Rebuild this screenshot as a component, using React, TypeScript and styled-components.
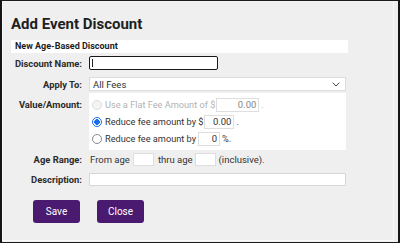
import React from "react";
import styled, { createGlobalStyle } from "styled-components";

const Global = createGlobalStyle`
  html, body { margin: 0; padding: 0; }
  body { font-family: Roboto, "Liberation Sans", Arial, sans-serif; background: #f0f0f0; }
  * { box-sizing: border-box; }
`;

const Frame = styled.div`
  width: 400px;
  height: 243px;
  border-left: 2px solid #161616;
  border-top: 1px solid #1c1c1c;
  border-right: 2px solid #161616;
  border-bottom: 1px solid #1c1c1c;
  background: #efefef;
  display: flex;
  padding: 0 4px 1px 0;
`;

const Panel = styled.div`
  flex: 1;
  border: 1px solid #f9f9f9;
  border-top-color: #f3f3f3;
  padding: 14px 0 0 8px;
  display: flex;
  flex-direction: column;
`;

const Title = styled.h1`
  margin: 0;
  font-size: 15px;
  line-height: 16px;
  font-weight: 700;
  color: #1e1e1e;
`;

const SectionHeader = styled.div`
  margin-top: 8px;
  width: 337px;
  height: 13px;
  background: #ffffff;
  font-size: 9px;
  font-weight: 700;
  line-height: 13px;
  padding-left: 4px;
  color: #1e1e1e;
`;

const Row = styled.div<{ $mt: number; $align?: string }>`
  display: grid;
  grid-template-columns: 71px 257px;
  column-gap: 7px;
  margin-top: ${(p) => p.$mt}px;
  align-items: ${(p) => p.$align || "center"};
`;

const Label = styled.div<{ $pt?: number }>`
  text-align: right;
  font-size: 9.4px;
  font-weight: 700;
  color: #2a2a2a;
  padding-top: ${(p) => p.$pt || 0}px;
`;

const TextInput = styled.div<{ $w?: number; $h: number; $focus?: boolean }>`
  width: ${(p) => (p.$w ? `${p.$w}px` : "100%")};
  height: ${(p) => p.$h}px;
  background: #fff;
  border: 1px solid ${(p) => (p.$focus ? "#1a1a1a" : "#d6d6d6")};
  border-radius: ${(p) => (p.$focus ? 2 : 1)}px;
  position: relative;
`;

const Caret = styled.span`
  position: absolute;
  left: 2px;
  top: 2px;
  bottom: 2px;
  width: 1px;
  background: #222;
`;

const Select = styled.div`
  height: 14px;
  background: #fff;
  border: 1px solid #dcdcdc;
  display: flex;
  align-items: center;
  justify-content: space-between;
  padding: 0 5px 0 3px;
  font-size: 9.5px;
  color: #333;
`;

const RadioBox = styled.div`
  background: #fff;
  padding: 3px 0 3px 3px;
  display: flex;
  flex-direction: column;
`;

const RadioRow = styled.div<{ $disabled?: boolean }>`
  height: 17px;
  display: flex;
  align-items: center;
  font-size: 9.2px;
  color: ${(p) => (p.$disabled ? "#b3b3b3" : "#333")};
`;

const Radio = styled.span<{ $checked?: boolean; $disabled?: boolean }>`
  width: 10px;
  height: 10px;
  border-radius: 50%;
  margin-right: 3px;
  flex: none;
  border: 1px solid
    ${(p) => (p.$disabled ? "#dddddd" : p.$checked ? "#1a6ee8" : "#8a8a8a")};
  background: ${(p) =>
    p.$checked
      ? "radial-gradient(circle, #1a6ee8 0 2.6px, #ffffff 3px 100%)"
      : p.$disabled
      ? "#f4f4f4"
      : "#fff"};
`;

const NumBox = styled.span<{ $w: number; $ml?: number; $disabled?: boolean }>`
  display: inline-block;
  width: ${(p) => p.$w}px;
  height: 14px;
  margin-left: ${(p) => p.$ml || 0}px;
  border: 1px solid #dedede;
  background: #fff;
  text-align: right;
  padding-right: 2px;
  line-height: 12px;
  font-size: 9.5px;
  color: ${(p) => (p.$disabled ? "#888" : "#333")};
`;

const Suffix = styled.span`
  margin-left: 2px;
`;

const AgeLine = styled.div`
  display: flex;
  align-items: center;
  font-size: 9.5px;
  color: #333;
  padding-left: 1px;
`;

const AgeBox = styled.span<{ $ml: number; $mr: number }>`
  display: inline-block;
  width: 21px;
  height: 13px;
  margin: 0 ${(p) => p.$mr}px 0 ${(p) => p.$ml}px;
  background: #fff;
  border: 1px solid #dedede;
`;

const Buttons = styled.div`
  display: flex;
  gap: 17px;
  margin-top: 14px;
  padding-left: 22px;
`;

const Button = styled.button`
  width: 47px;
  height: 23px;
  background: #4a1a70;
  color: #fff;
  border: none;
  border-radius: 3px;
  font-family: Roboto, "Liberation Sans", Arial, sans-serif;
  font-size: 10px;
  padding: 0;
`;

const Chevron = () => (
  <svg width="8" height="5" viewBox="0 0 8 5">
    <path d="M0.7 0.7 L4 4 L7.3 0.7" stroke="#444" strokeWidth="1" fill="none" />
  </svg>
);

export default function App() {
  return (
    <>
      <Global />
      <Frame>
        <Panel>
          <Title>Add Event Discount</Title>
          <SectionHeader>New Age-Based Discount</SectionHeader>
          <Row $mt={3}>
            <Label>Discount Name:</Label>
            <TextInput $w={129} $h={14} $focus>
              <Caret />
            </TextInput>
          </Row>
          <Row $mt={7}>
            <Label>Apply To:</Label>
            <Select>
              <span>All Fees</span>
              <Chevron />
            </Select>
          </Row>
          <Row $mt={2} $align="start">
            <Label $pt={6}>Value/Amount:</Label>
            <RadioBox>
              <RadioRow $disabled>
                <Radio $disabled />
                Use a Flat Fee Amount of $
                <NumBox $w={43} $ml={1} $disabled>0.00</NumBox>
                <Suffix>.</Suffix>
              </RadioRow>
              <RadioRow>
                <Radio $checked />
                Reduce fee amount by $
                <NumBox $w={30} $ml={1}>0.00</NumBox>
                <Suffix>.</Suffix>
              </RadioRow>
              <RadioRow>
                <Radio />
                Reduce fee amount by
                <NumBox $w={22} $ml={2}>0</NumBox>
                <Suffix>%.</Suffix>
              </RadioRow>
            </RadioBox>
          </Row>
          <Row $mt={3}>
            <Label>Age Range:</Label>
            <AgeLine>
              From age
              <AgeBox $ml={3} $mr={4} />
              thru age
              <AgeBox $ml={2} $mr={3} />
              (inclusive).
            </AgeLine>
          </Row>
          <Row $mt={7}>
            <Label>Description:</Label>
            <TextInput $h={13} />
          </Row>
          <Buttons>
            <Button>Save</Button>
            <Button>Close</Button>
          </Buttons>
        </Panel>
      </Frame>
    </>
  );
}
